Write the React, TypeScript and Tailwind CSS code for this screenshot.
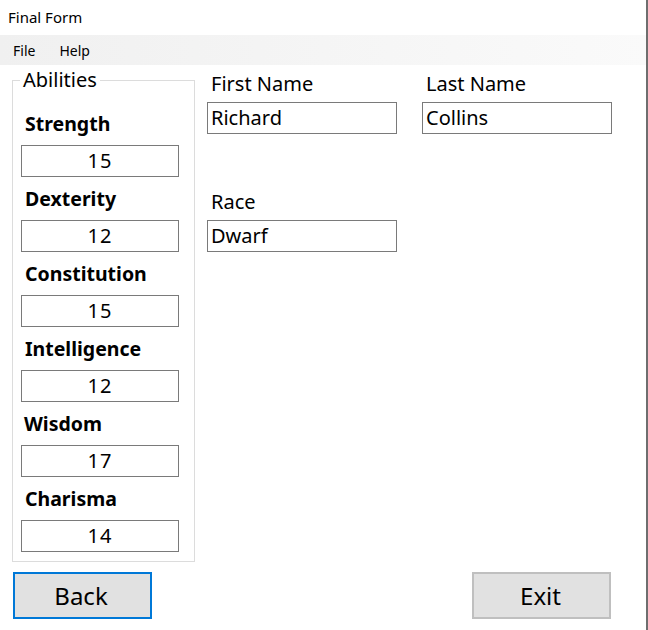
import React from "react";

const abilities = [
  { name: "Strength", value: "15", nudge: "pl-[4px]" },
  { name: "Dexterity", value: "12", nudge: "pl-[4px]" },
  { name: "Constitution", value: "15", nudge: "pl-[4px]" },
  { name: "Intelligence", value: "12", nudge: "pl-[4px]" },
  { name: "Wisdom", value: "17", nudge: "pl-[3px]" },
  { name: "Charisma", value: "14", nudge: "pl-[4px]" },
];

function Field({ label, value }: { label: string; value: string }) {
  return (
    <div className="flex w-[190px] flex-col">
      <div className="h-[28px] pl-[4px] text-[20px] leading-[28px] text-black">{label}</div>
      <div className="mt-[4px] flex h-[32px] items-center border border-[#7a7a7a] bg-white pb-[1px] pl-[3px] pr-[4px] text-[20px] leading-none text-black">
        {value}
      </div>
    </div>
  );
}

export default function App() {
  return (
    <div
      className="flex h-[630px] w-[648px] bg-white text-black"
      style={{ fontFamily: '"Noto Sans", "Open Sans", sans-serif' }}
    >
      <div className="flex w-[646px] flex-col">
        {/* Title bar */}
        <div className="flex h-[34px] items-center pl-[8px] text-[15px]">Final Form</div>
        {/* Menu bar */}
        <div className="mt-[1px] flex h-[30px] items-center gap-[24px] bg-gradient-to-r from-[#f0f0f0] to-[#fafafa] pl-[13px] text-[14px]">
          <span>File</span>
          <span>Help</span>
        </div>
        {/* Content */}
        <div className="flex">
          <div className="relative ml-[12px] mt-[15px] flex h-[482px] w-[183px] flex-col border border-[#dcdcdc] pb-[8px] pl-[8px] pt-[29px]">
            <span className="absolute left-[7px] top-[-16px] bg-white px-[3px] text-[20px] leading-[30px]">
              Abilities
            </span>
            {abilities.map((a, i) => (
              <div key={a.name} className={i === 0 ? "flex flex-col" : "mt-[8px] flex flex-col"}>
                <div className={`h-[28px] text-[19.5px] font-bold leading-[28px] ${a.nudge}`}>{a.name}</div>
                <div className="mt-[7px] flex h-[32px] w-[158px] items-center justify-center border border-[#7a7a7a] pb-[1px] text-[20px] leading-none tracking-[1px]">
                  {a.value}
                </div>
              </div>
            ))}
          </div>
          <div className="ml-[12px] mt-[5px] flex flex-col">
            <div className="flex gap-[25px]">
              <Field label="First Name" value="Richard" />
              <Field label="Last Name" value="Collins" />
            </div>
            <div className="mt-[54px]">
              <Field label="Race" value="Dwarf" />
            </div>
          </div>
        </div>
        {/* Buttons */}
        <div className="ml-[13px] mt-[10px] flex w-[598px] justify-between">
          <button className="flex h-[47px] w-[139px] items-center justify-center border-2 border-[#0078d7] bg-[#e1e1e1] pr-[3px] text-[24px] leading-none text-black">
            Back
          </button>
          <button className="flex h-[47px] w-[139px] items-center justify-center border-2 border-[#bfbfbf] bg-[#e1e1e1] pr-[2px] text-[24px] leading-none text-black">
            Exit
          </button>
        </div>
      </div>
      <div className="h-full w-[2px] bg-[#6e6e6e]" />
    </div>
  );
}
